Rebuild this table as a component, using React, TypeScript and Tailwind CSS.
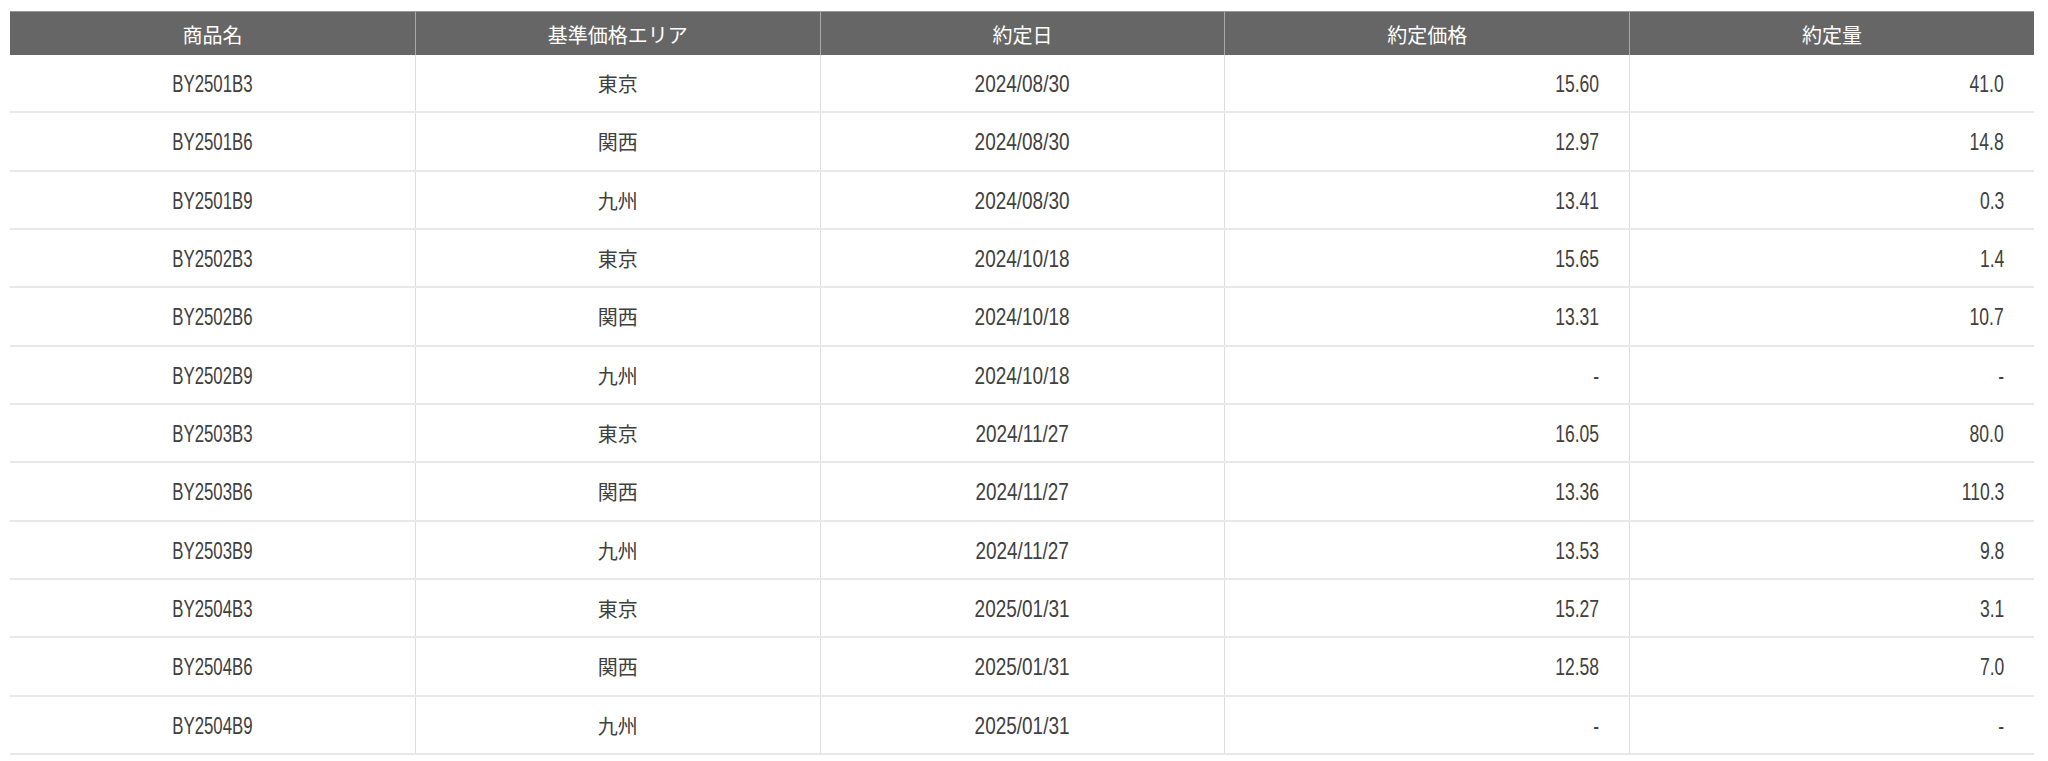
import React from "react";

type Row = [string, string, string, string, string];

const rows: Row[] = [
  ["BY2501B3", "東京", "2024/08/30", "15.60", "41.0"],
  ["BY2501B6", "関西", "2024/08/30", "12.97", "14.8"],
  ["BY2501B9", "九州", "2024/08/30", "13.41", "0.3"],
  ["BY2502B3", "東京", "2024/10/18", "15.65", "1.4"],
  ["BY2502B6", "関西", "2024/10/18", "13.31", "10.7"],
  ["BY2502B9", "九州", "2024/10/18", "-", "-"],
  ["BY2503B3", "東京", "2024/11/27", "16.05", "80.0"],
  ["BY2503B6", "関西", "2024/11/27", "13.36", "110.3"],
  ["BY2503B9", "九州", "2024/11/27", "13.53", "9.8"],
  ["BY2504B3", "東京", "2025/01/31", "15.27", "3.1"],
  ["BY2504B6", "関西", "2025/01/31", "12.58", "7.0"],
  ["BY2504B9", "九州", "2025/01/31", "-", "-"],
];

const headers = ["商品名", "基準価格エリア", "約定日", "約定価格", "約定量"];

const latin = "font-['Liberation_Sans','Noto_Sans_CJK_JP',sans-serif] text-[24px] inline-block";
const cjk = "font-['Noto_Sans_CJK_JP',sans-serif] text-[20px]";

const scaleFor = (ci: number) =>
  ci === 0 ? "scale-x-[0.7] origin-center" : ci === 2 ? "scale-x-[0.79] origin-center" : "scale-x-[0.73] origin-right";

export default function App() {
  return (
    <div className="w-[2048px] h-[761px] bg-white pt-[11px] pl-[10px]">
      <div className="w-[2024px]">
        <div className="grid grid-cols-5 h-[44px] bg-[#666666] border-t border-[#9a9a9a]">
          {headers.map((h, i) => (
            <div
              key={h}
              className={`flex items-center justify-center pt-[3px] text-white ${cjk} ${i > 0 ? "border-l border-[#a8a8a8]" : ""}`}
            >
              {h}
            </div>
          ))}
        </div>
        {rows.map((r, ri) => (
          <div key={ri} className="grid grid-cols-5 h-[58.33px] border-b-2 border-[#e8e8e8] text-[#404040]">
            {r.map((c, ci) => (
              <div
                key={ci}
                className={`flex items-center pt-[2px] ${ci >= 3 ? "justify-end pr-[30px]" : "justify-center"} ${ci > 0 ? "border-l border-[#dddddd]" : ""}`}
              >
                {ci === 1 ? (
                  <span className={cjk}>{c}</span>
                ) : (
                  <span className={`${latin} ${scaleFor(ci)}`}>{c}</span>
                )}
              </div>
            ))}
          </div>
        ))}
      </div>
    </div>
  );
}
